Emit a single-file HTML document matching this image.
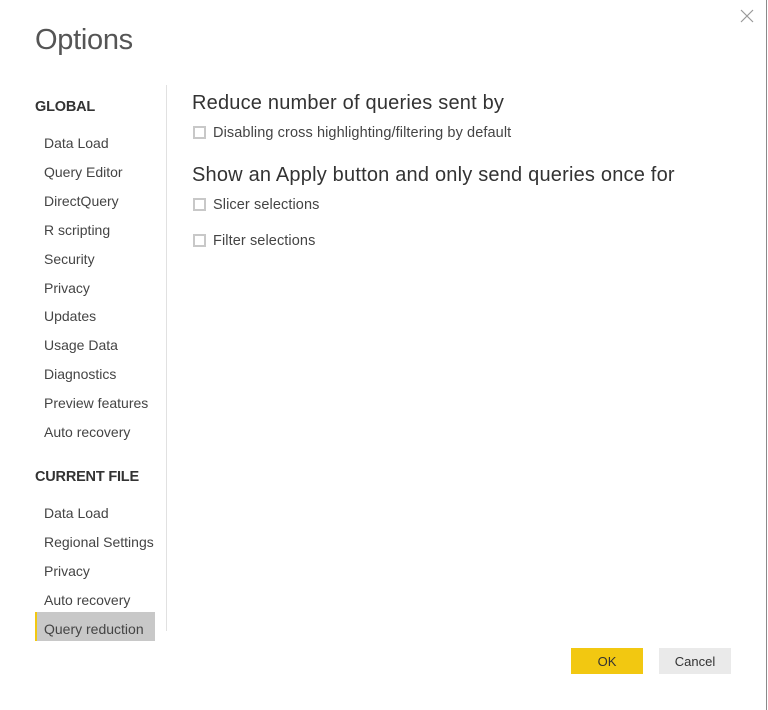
<!DOCTYPE html>
<html><head><meta charset="utf-8"><style>
*{margin:0;padding:0;box-sizing:border-box}
body{width:768px;height:710px;background:#fff;font-family:"Liberation Sans",sans-serif;color:#333;position:relative;overflow:hidden}
.a{position:absolute;white-space:nowrap}
.title{left:35px;top:24px;font-size:29px;color:#555;letter-spacing:-0.3px}
.h{left:35px;font-size:14.5px;font-weight:bold;color:#333;letter-spacing:-0.2px}
.n{left:44px;font-size:14px;color:#444;line-height:18px}
.sel{position:absolute;left:35px;top:612px;width:120px;height:29px;background:#c8c8c8;border-left:2px solid #f2c811}
.div{position:absolute;left:166px;top:85px;width:1px;height:546px;background:#e1e1e1}
.sh{left:192px;font-size:20px;color:#333;letter-spacing:0.2px}
.cb{position:absolute;left:193px;width:13px;height:13px;border:2px solid #c8c8c8}
.ct{left:213px;font-size:14.5px;color:#444;letter-spacing:0.1px}
.btn{position:absolute;top:648px;width:72px;height:26px;font-size:13px;text-align:center;line-height:28px;color:#333}
</style></head><body>
<div style="position:absolute;right:1px;top:0;width:1px;height:710px;background:#8a8a8a"></div>
<svg class="a" style="left:740px;top:9px" width="14" height="14"><path d="M1 1L13 13M13 1L1 13" stroke="#999" stroke-width="1.2"/></svg>
<div class="a title">Options</div>
<div class="a h" style="top:99px">GLOBAL</div>
<div class="a n" style="top:134px">Data Load</div>
<div class="a n" style="top:163px">Query Editor</div>
<div class="a n" style="top:192px">DirectQuery</div>
<div class="a n" style="top:221px">R scripting</div>
<div class="a n" style="top:250px">Security</div>
<div class="a n" style="top:279px">Privacy</div>
<div class="a n" style="top:307px">Updates</div>
<div class="a n" style="top:336px">Usage Data</div>
<div class="a n" style="top:365px">Diagnostics</div>
<div class="a n" style="top:394px">Preview features</div>
<div class="a n" style="top:423px">Auto recovery</div>
<div class="a h" style="top:469px">CURRENT FILE</div>
<div class="a n" style="top:504px">Data Load</div>
<div class="a n" style="top:533px">Regional Settings</div>
<div class="a n" style="top:562px">Privacy</div>
<div class="a n" style="top:591px">Auto recovery</div>
<div class="sel"></div>
<div class="a n" style="top:620px">Query reduction</div>
<div class="div"></div>
<div class="a sh" style="top:92px">Reduce number of queries sent by</div>
<div class="cb" style="top:126px"></div>
<div class="a ct" style="top:125px">Disabling cross highlighting/filtering by default</div>
<div class="a sh" style="top:164px">Show an Apply button and only send queries once for</div>
<div class="cb" style="top:198px"></div>
<div class="a ct" style="top:197px">Slicer selections</div>
<div class="cb" style="top:234px"></div>
<div class="a ct" style="top:233px">Filter selections</div>
<div class="btn" style="left:571px;background:#f2c811">OK</div>
<div class="btn" style="left:659px;background:#eaeaea">Cancel</div>
</body></html>
